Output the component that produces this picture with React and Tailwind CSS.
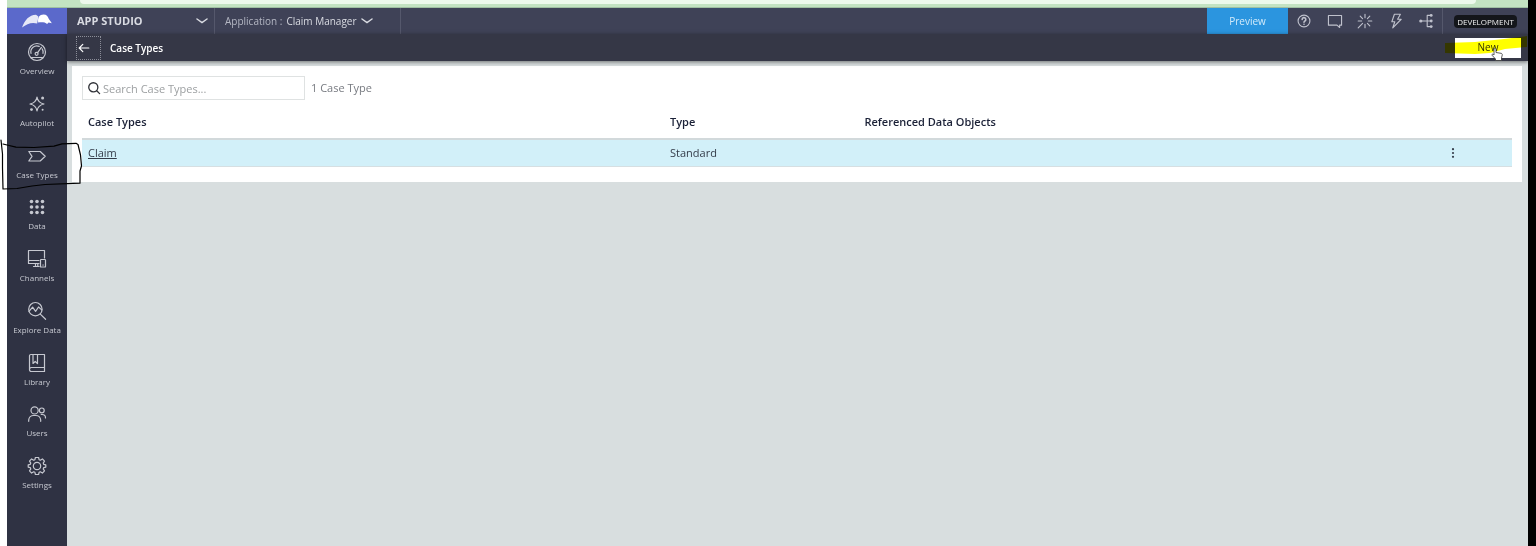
import React from 'react';

function Icon({ className = 'size-5', children, stroke = 1.2 }) {
  return (
    <svg viewBox="0 0 20 20" className={className} fill="none" stroke="currentColor" strokeWidth={stroke} strokeLinecap="round" strokeLinejoin="round" aria-hidden="true">
      {children}
    </svg>
  );
}

const dots = [4.5, 10, 15.5];

const navItems = [
  {
    label: 'Overview',
    icon: (
      <>
        <circle cx="10" cy="10" r="8.500" />
        <path d="M4 11.300a6 6 0 0 1 8.200-6.900M15.200 6.900a6 6 0 0 1 .8 4.400M4.500 15.500h11M10.600 10.600l3.800-5.200" />
        <circle cx="9.600" cy="11.800" r="1.500" />
      </>
    ),
  },
  {
    label: 'Autopilot',
    icon: (
      <>
        <path d="M10 3c.7 4.500 2.500 6.200 7 7-4.500.8-6.300 2.500-7 7-.7-4.500-2.500-6.200-7-7 4.500-.8 6.300-2.500 7-7z" />
        <g fill="currentColor" stroke="none">
          <circle cx="15.600" cy="4" r="1.500" />
          <circle cx="4.500" cy="15.600" r="1.400" />
          <circle cx="15.600" cy="15.800" r="1" />
        </g>
      </>
    ),
  },
  { label: 'Case Types', icon: <path d="M1.800 5.500h11.400l5 4.800-5 4.700H1.800L5 10.300z" /> },
  {
    label: 'Data',
    icon: (
      <g fill="currentColor" stroke="none">
        {dots.map((y) => dots.map((x) => <circle key={`${x}-${y}`} cx={x} cy={y} r="1.800" />))}
      </g>
    ),
  },
  {
    label: 'Channels',
    icon: (
      <>
        <path d="M12 14.500H1.500v-13h16v7.500M1.500 11.500H12M8.500 14.500v3M10.800 14.500v3M6.500 17.500h5.700" />
        <rect x="13.500" y="10.500" width="5" height="7.500" rx=".6" />
        <path d="M15.800 16h.5" />
      </>
    ),
  },
  {
    label: 'Explore Data',
    icon: (
      <>
        <circle cx="8.400" cy="8.200" r="6.700" />
        <path d="M13.300 13.100l5.300 5.200M2 10.300l3.600-4.100 3 4.100 2.900-4.300 3.300 2.900" />
      </>
    ),
  },
  {
    label: 'Library',
    icon: (
      <path d="M17.500 14.500v-13H3.900a1.400 1.400 0 0 0-1.400 1.400v13.800a1.800 1.800 0 0 0 1.800 1.800h13.200v-4H4.300a1.800 1.800 0 0 0-1.800 1.800M6 1.500v9l2.200-2 2.300 2v-9" />
    ),
  },
  {
    label: 'Users',
    icon: (
      <>
        <circle cx="7.600" cy="6.400" r="3.600" />
        <path d="M1.700 17.300V16a4.900 4.900 0 0 1 4.900-4.500h2.200a4.900 4.900 0 0 1 4.900 4.500v1.300" />
        <circle cx="14.800" cy="6.400" r="2.400" />
        <path d="M14.200 10.500h.9a3.400 3.400 0 0 1 3.400 3.400" />
      </>
    ),
  },
  {
    label: 'Settings',
    icon: (
      <>
        <circle cx="10" cy="10" r="3.700" />
        <path d="M8.400 1.500h3.200l.5 2.200 1.200.5 2.100-1.300 2.100 2.300-1.300 1.900.6 1.300 2 .5v2.200l-2 .5-.6 1.300 1.300 1.900-2.100 2.300-2.100-1.300-1.200.5-.5 2.200H8.400l-.5-2.200-1.200-.5-2.100 1.300-2.100-2.300 1.300-1.900-.6-1.300-2-.5V8.900l2-.5.6-1.300-1.300-1.900 2.100-2.300 2.100 1.300 1.200-.5z" />
      </>
    ),
  },
];

const tools = [
  {
    label: 'Help',
    icon: (
      <>
        <circle cx="10" cy="10" r="7.400" />
        <path strokeWidth="2" d="M7.700 8.200a2.300 2.300 0 1 1 3.500 1.800c-.8.500-1.200.9-1.200 1.700M10 14v.1" />
      </>
    ),
  },
  { label: 'Messages', icon: <path d="M1.800 3.200h16.400v12h-2.400v3l-3.300-3H1.800z" /> },
  { label: 'Insights', icon: <path d="M10 1.500v4.300M10 14.200v4.300M18.500 10h-4.300M5.800 10H1.500M16 4l-3 3M7 7L4 4M16 16l-3-3M7 13l-5.500 5.500" /> },
  { label: 'Quick actions', icon: <path d="M8 1.500h7.500L12 7.800h4.500L6 18.500 8.500 11H4.800z" /> },
  {
    label: 'Structure',
    icon: (
      <>
        <path d="M4 10h13M16.500 3H11.500v14h5" />
        <g fill="currentColor" stroke="none">
          <circle cx="3.500" cy="10" r="2" />
          <circle cx="16.500" cy="3" r="1.800" />
          <circle cx="16.500" cy="10" r="1.800" />
          <circle cx="16.500" cy="17" r="1.800" />
        </g>
      </>
    ),
  },
];

function Chevron() {
  return (
    <svg viewBox="0 0 12 8" className="h-2 w-3 shrink-0" fill="none" stroke="currentColor" strokeWidth="1.500" strokeLinecap="round" aria-hidden="true">
      <path d="M1 2l5 3.500L11 2" />
    </svg>
  );
}

function Sidebar() {
  return (
    <aside className="flex w-[60px] shrink-0 flex-col bg-[#2f3243]">
      <a href="#home" aria-label="Home" className="flex h-[26px] items-center justify-center bg-[#5b69cb] text-white">
        <svg viewBox="0 0 30 14" className="h-[14px] w-[30px]" fill="currentColor" aria-hidden="true">
          <path d="M0 13.500C3 6 7 1 14 .8l2.400 1.600L15.200 9.600C9.500 8 5 10 0 13.500z" opacity=".85" />
          <path d="M16.200 8.500C15.500 3.500 17.500.6 21.500.6c3.200 0 4.300 2 5.100 3.900.6 1.400 2 2.400 3.200 4.800l-3.200-.7-1.500 1.400c-1.800-1.800-5.300-1.900-8.900-1.500z" />
        </svg>
      </a>
      <nav aria-label="Main" className="relative">
        <ul className="grid h-[466px] auto-rows-fr">
          {navItems.map((item) => (
            <li key={item.label}>
              <a href="#" className="flex flex-col items-center gap-px pt-2 text-[#c6c8d0]">
                <Icon>{item.icon}</Icon>
                <span className="text-[8px] leading-4 font-medium whitespace-nowrap">{item.label}</span>
              </a>
            </li>
          ))}
        </ul>
        <svg viewBox="0 0 84 52" className="pointer-events-none absolute top-[105px] -left-[7px] z-10 h-[52px] w-[84px]" fill="none" stroke="#000" strokeWidth="1.200" strokeLinecap="round" strokeLinejoin="round" aria-hidden="true">
          <path d="M1 1l1.500 14v14l.5 21 14-.5 15-2.500 13-1.500 35-1.300V32l1.500-5-1-11-2.500-10.500L76 4.300l-14 .6-8 2.300-20 1.300-18-.3L7 6 3 5" />
        </svg>
      </nav>
    </aside>
  );
}

function TopBar() {
  return (
    <header className="flex h-[26px] items-stretch bg-[#3f4257] text-[#d9dbe2]">
      <button type="button" className="flex w-[148px] items-center justify-between border-r border-[#55586c] pr-1.5 pl-2.5 text-[11px] font-bold">
        APP STUDIO
        <Chevron />
      </button>
      <button type="button" className="flex w-[186px] items-center gap-1 border-r border-[#55586c] pl-2.5 text-[10px] font-medium whitespace-nowrap">
        <span className="text-[#b4b7c3]">Application :</span>
        <span>Claim Manager</span>
        <Chevron />
      </button>
      <div className="ml-auto flex">
        <button type="button" className="w-[81px] bg-[#2b95df] text-[10px] font-medium text-[#d3ebfa]">Preview</button>
        <div className="flex w-[155px] items-center justify-between border-r border-[#55586c] px-2">
          {tools.map((tool) => (
            <button key={tool.label} type="button" aria-label={tool.label} className="text-[#bfc1cc]">
              <Icon className="size-4" stroke={1.4}>{tool.icon}</Icon>
            </button>
          ))}
        </div>
        <div className="flex w-[85px] items-center justify-center">
          <span className="rounded-sm bg-[#14161b] px-[3px] text-[8px] leading-[13px] font-medium text-[#f0f0f0]">DEVELOPMENT</span>
        </div>
      </div>
    </header>
  );
}

function TitleBar() {
  return (
    <div className="relative flex h-[27px] items-center bg-[#353746] pr-[7px] pl-[9px] text-white shadow-[0_1px_4px_rgba(0,0,0,0.5)]">
      <button type="button" aria-label="Back" className="flex h-6 w-[25px] items-center border border-dotted border-[#8b8d98] pl-px">
        <Icon className="size-3" stroke={2}>
          <path d="M18 10H2M8 4l-6 6 6 6" />
        </Icon>
      </button>
      <h1 className="ml-[9px] pt-0.5 text-[10px] font-semibold">Case Types</h1>
      <button type="button" className="ml-auto h-5 w-[66px] bg-white text-[10px] font-medium text-[#30323d]">New</button>
      <svg viewBox="0 0 84 20" className="pointer-events-none absolute top-[2px] right-0 h-5 w-[84px] mix-blend-multiply" aria-hidden="true">
        <path d="M1 7l30-1 29-3 23-3v11l-22 2-15 4-15 1-30-1z" fill="#ffff00" />
      </svg>
      <svg viewBox="0 0 12 14" className="pointer-events-none absolute top-[13px] right-[25px] h-[14px] w-3" fill="#fff" stroke="#333" strokeWidth=".8" strokeLinejoin="round" aria-hidden="true">
        <path d="M3 8V2a1 1 0 0 1 2 0v3.500l5 .8c1 .2 1.300.8 1.300 1.500L10.500 11v2.500H4.500V12L1 8.200C.6 7.300 1.600 6.700 3 8z" />
      </svg>
    </div>
  );
}

function CaseTypes() {
  return (
    <section className="mt-[5px] mr-1.5 ml-[5px] bg-white px-2.5 pt-2.5 pb-[15px] text-[11px]">
      <div className="flex items-center gap-1.5 text-[#777a80]">
        <div className="flex h-6 w-[223px] items-center gap-0.5 border border-[#dfe2e2] bg-white pl-1">
          <Icon className="size-3.5 shrink-0 text-[#303238]" stroke={1.9}>
            <circle cx="9" cy="9" r="6.500" />
            <path d="M14 14l4 4" />
          </Icon>
          <input type="search" aria-label="Search case types" placeholder="Search Case Types..." className="h-full w-full min-w-0 bg-transparent outline-none placeholder:text-[#9da0a2]" />
        </div>
        <span>1 Case Type</span>
      </div>
      <table className="mt-1.5 w-full table-fixed border-collapse text-left">
        <colgroup>
          <col className="w-[40.700%]" />
          <col className="w-[13.600%]" />
          <col />
          <col className="w-[66px]" />
        </colgroup>
        <thead>
          <tr className="h-[33px] border-b-2 border-[#d2d9db] text-[#1b2137]">
            <th className="px-1.5 font-semibold">Case Types</th>
            <th className="px-1.5 font-semibold">Type</th>
            <th className="px-1.5 font-semibold">Referenced Data Objects</th>
            <th aria-label="Actions" />
          </tr>
        </thead>
        <tbody>
          <tr className="h-[27px] border-b border-[#d6dfe2] bg-[#d2f0f9] text-[#343c49]">
            <td className="px-1.5"><a href="#claim" className="underline">Claim</a></td>
            <td className="px-1.5">Standard</td>
            <td />
            <td>
              <button type="button" aria-label="More actions" className="flex w-3.5 justify-center">
                <svg viewBox="0 0 4 10" className="h-2.5 w-1" fill="currentColor" aria-hidden="true">
                  <circle cx="2" cy="1.200" r="1.100" />
                  <circle cx="2" cy="5" r="1.100" />
                  <circle cx="2" cy="8.800" r="1.100" />
                </svg>
              </button>
            </td>
          </tr>
        </tbody>
      </table>
    </section>
  );
}

export default function App() {
  return (
    <div className="flex min-h-screen flex-col border-r-8 border-l-[7px] border-r-black border-l-white bg-[#d8dedf] font-['Open_Sans','Noto_Sans',sans-serif]">
      <div className="h-2 border-b border-[#9fbfa2] bg-[#c3e3c2] pr-[52px] pl-[73px]">
        <div className="h-1 rounded-b-full bg-[#edf9ec]" />
      </div>
      <div className="flex flex-1">
        <Sidebar />
        <main className="min-w-0 flex-1">
          <TopBar />
          <TitleBar />
          <CaseTypes />
        </main>
      </div>
    </div>
  );
}
